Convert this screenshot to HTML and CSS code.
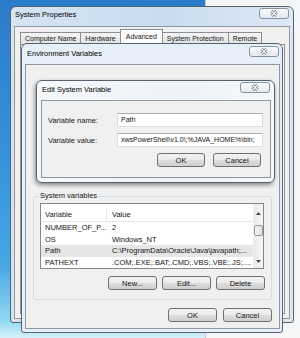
FILE: index.html
```html
<!DOCTYPE html>
<html lang="en">
<head>
    <meta charset="UTF-8">
    <meta name="viewport" content="width=device-width, initial-scale=1.0">
    <title>Environment Variables</title>
    <link rel="stylesheet" href="styles.css">
</head>
<body>

    <div class="desktop">
        <!-- window lying behind everything on the right -->
        <div class="window behind"></div>

        <!-- System Properties -->
        <div class="window sysprops">
            <div class="titlebar">
                <span class="title">System Properties</span>
                <span class="close-btn">
                    <svg width="30" height="11" viewBox="0 0 30 11"><path d="M12.5 3 L17.5 8 M17.5 3 L12.5 8" stroke="#6b7480" stroke-width="2.8"/><path d="M12.5 3 L17.5 8 M17.5 3 L12.5 8" stroke="#ffffff" stroke-width="1.1"/></svg>
                </span>
            </div>
            <div class="client">
                <div class="tabs">
                    <span class="tab">Computer Name</span>
                    <span class="tab">Hardware</span>
                    <span class="tab active">Advanced</span>
                    <span class="tab">System Protection</span>
                    <span class="tab">Remote</span>
                </div>
                <div class="tab-panel"></div>
            </div>
        </div>

        <!-- Environment Variables -->
        <div class="window envvars">
            <div class="titlebar">
                <span class="title">Environment Variables</span>
                <span class="close-btn">
                    <svg width="30" height="11" viewBox="0 0 30 11"><path d="M12.5 3 L17.5 8 M17.5 3 L12.5 8" stroke="#6b7480" stroke-width="2.8"/><path d="M12.5 3 L17.5 8 M17.5 3 L12.5 8" stroke="#ffffff" stroke-width="1.1"/></svg>
                </span>
            </div>
            <div class="client">
                <fieldset class="group">
                    <legend>System variables</legend>
                    <div class="listview">
                        <div class="lv-body">
                            <div class="lv-header">
                                <span class="col-name">Variable</span>
                                <span class="col-value">Value</span>
                            </div>
                            <div class="lv-row">
                                <span class="col-name">NUMBER_OF_P...</span>
                                <span class="col-value">2</span>
                            </div>
                            <div class="lv-row">
                                <span class="col-name">OS</span>
                                <span class="col-value">Windows_NT</span>
                            </div>
                            <div class="lv-row selected">
                                <span class="col-name">Path</span>
                                <span class="col-value">C:\ProgramData\Oracle\Java\javapath;...</span>
                            </div>
                            <div class="lv-row">
                                <span class="col-name">PATHEXT</span>
                                <span class="col-value">.COM;.EXE;.BAT;.CMD;.VBS;.VBE;.JS;....</span>
                            </div>
                        </div>
                        <div class="scrollbar">
                            <span class="sb-arrow up"><svg width="5" height="3" viewBox="0 0 5 3"><polygon points="0,3 2.5,0 5,3" fill="#4d4d4d"/></svg></span>
                            <span class="sb-thumb"></span>
                            <span class="sb-arrow down"><svg width="5" height="3" viewBox="0 0 5 3"><polygon points="0,0 2.5,3 5,0" fill="#4d4d4d"/></svg></span>
                        </div>
                    </div>
                    <div class="button-row">
                        <button class="btn">New...</button>
                        <button class="btn">Edit...</button>
                        <button class="btn">Delete</button>
                    </div>
                </fieldset>
                <div class="button-row dialog-buttons">
                    <button class="btn">OK</button>
                    <button class="btn">Cancel</button>
                </div>
            </div>
        </div>

        <!-- Edit System Variable -->
        <div class="window editvar">
            <div class="titlebar">
                <span class="title">Edit System Variable</span>
                <span class="close-btn">
                    <svg width="30" height="11" viewBox="0 0 30 11"><path d="M12.5 3 L17.5 8 M17.5 3 L12.5 8" stroke="#6b7480" stroke-width="2.8"/><path d="M12.5 3 L17.5 8 M17.5 3 L12.5 8" stroke="#ffffff" stroke-width="1.1"/></svg>
                </span>
            </div>
            <div class="client">
                <div class="form-row">
                    <label>Variable name:</label>
                    <span class="textbox">Path</span>
                </div>
                <div class="form-row">
                    <label>Variable value:</label>
                    <span class="textbox">xwsPowerShell\v1.0\;%JAVA_HOME%\bin;</span>
                </div>
                <div class="button-row edit-buttons">
                    <button class="btn">OK</button>
                    <button class="btn">Cancel</button>
                </div>
            </div>
        </div>
    </div>

</body>
</html>
```

FILE: styles.css
```css
* {
    box-sizing: border-box;
}
body {
    margin: 0;
    width: 300px;
    height: 338px;
    overflow: hidden;
    font-family: 'Liberation Sans', Arial, sans-serif;
    font-size: 7.5px;
    color: #151515;
    background: linear-gradient(to bottom, #2b7bcb 0%, #3591da 45%, #47a6e4 78%, #92d8f2 95%, #d6f2fa 100%);
}
.desktop {
    position: relative;
    width: 300px;
    height: 338px;
}
/* Windows */
.window {
    position: absolute;
    display: flex;
    flex-direction: column;
    border: 1px solid #56636f;
    border-radius: 6px 6px 3px 3px;
}
.behind {
    left: 205px;
    top: -6px;
    width: 110px;
    height: 360px;
    background: #f3f5f7;
    border-color: #c4c8cc;
}
.titlebar {
    display: flex;
    justify-content: space-between;
    align-items: flex-start;
}
.title {
    line-height: 18px;
    color: #000;
}
.close-btn {
    display: block;
    width: 30px;
    height: 11px;
    border: 1px solid #8593a2;
    border-radius: 3px;
    background: linear-gradient(#fbfcfd, #e3e9f0);
}
.close-btn svg {
    display: block;
    margin: -1px 0 0 -1px;
}
.client {
    flex: 1;
    background-color: #f0f0f0;
    border: 1px solid #8d98a3;
}
/* System Properties */
.sysprops {
    left: 10px;
    top: 6px;
    width: 284px;
    height: 317px;
    padding: 0 3px 3px;
    background: linear-gradient(to right, #d4e4f3, #c9dcef 55%, #dde9f5);
}
.sysprops .titlebar {
    height: 19px;
}
.sysprops .title {
    margin-left: 1px;
    line-height: 16px;
}
.sysprops .close-btn {
    margin: 1px 1px 0 0;
}
.sysprops .client {
    display: flex;
    flex-direction: column;
    padding: 5px 4px 4px 5px;
}
.tabs {
    display: flex;
    align-items: flex-end;
    height: 12px;
}
.tab {
    height: 12px;
    padding: 0 4px;
    font-size: 7px;
    line-height: 11px;
    border: 1px solid #8a8e96;
    border-bottom: none;
    margin-right: -1px;
    background: linear-gradient(#f4f4f4, #e2e2e2);
}
.tab.active {
    height: 15px;
    line-height: 14px;
    padding: 0 5px;
    background: #fcfcfc;
    position: relative;
}
.tab-panel {
    flex: 1;
    background-color: #fcfcfc;
    border: 1px solid #8a8e96;
}
/* Environment Variables */
.envvars {
    left: 21px;
    top: 43px;
    width: 262px;
    height: 290px;
    padding: 0 2px 3px 3px;
    background: #e6eff8;
}
.envvars .titlebar {
    height: 20px;
}
.envvars .title {
    margin: 1px 0 0 2px;
}
.envvars .close-btn {
    margin: 2px 1px 0 0;
}
.envvars .client {
    padding: 0 7px;
}
.group {
    margin: 126px 0 0;
    padding: 2px 7px 9px 6px;
    min-width: 0;
    border: 1px solid #d3dbe2;
    border-radius: 3px;
}
.group legend {
    padding: 0 1px;
    margin-left: -1px;
    line-height: 10px;
}
.listview {
    display: flex;
    height: 66px;
    border: 1px solid #828790;
    background-color: #ffffff;
}
.lv-body {
    flex: 1;
    min-width: 0;
}
.lv-header,
.lv-row {
    display: flex;
    white-space: nowrap;
}
.lv-header {
    height: 18px;
    padding-top: 4px;
    line-height: 14px;
    border-bottom: 1px solid #e3e6ea;
}
.lv-header .col-name {
    border-right: 1px solid #e3e6ea;
}
.lv-row {
    height: 11.5px;
    line-height: 11.5px;
}
.lv-row.selected {
    background-color: #e6e6e6;
}
.col-name {
    width: 66px;
    padding-left: 4px;
    flex-shrink: 0;
}
.col-value {
    padding-left: 5px;
    overflow: hidden;
}
.scrollbar {
    width: 10px;
    display: flex;
    flex-direction: column;
    align-items: center;
    background: linear-gradient(to right, #eaeaea, #f6f6f6);
    border-left: 1px solid #f0f0f0;
}
.sb-arrow {
    display: flex;
    justify-content: center;
    width: 100%;
}
.sb-arrow.up {
    height: 16px;
    padding-top: 8px;
}
.sb-arrow.down {
    margin-top: auto;
    height: 12px;
    padding-top: 4px;
}
.sb-thumb {
    width: 9px;
    height: 11px;
    margin-top: 5px;
    border: 1px solid #979797;
    border-radius: 2px;
    background: linear-gradient(to right, #f4f4f4, #e0e0e0);
}
.button-row {
    display: flex;
    justify-content: flex-end;
    gap: 5px;
    margin-top: 7px;
    margin-right: -1px;
}
.btn {
    width: 49px;
    height: 14px;
    padding: 0;
    font-family: inherit;
    font-size: 7.5px;
    color: #151515;
    border: 1px solid #707070;
    border-radius: 3px;
    background: linear-gradient(#f2f2f2 0%, #ebebeb 50%, #dddddd 51%, #cfcfcf 100%);
}
.dialog-buttons {
    gap: 6px;
    margin-top: 8px;
    margin-right: 0;
}
/* Edit System Variable */
.editvar {
    left: 36px;
    top: 80px;
    width: 239px;
    height: 103px;
    padding: 0 3px 4px 4px;
    border-radius: 6px;
    background: linear-gradient(to right, #f6f9fc, #edf3f9 60%, #f4f8fb);
    box-shadow: -1px 2px 4px rgba(0, 0, 0, 0.45);
}
.editvar .titlebar {
    height: 19px;
}
.editvar .title {
    margin-left: 1px;
}
.editvar .close-btn {
    margin: 1px 1px 0 0;
}
.editvar .client {
    padding: 12px 7px 0 6px;
}
.form-row {
    display: flex;
    align-items: center;
    height: 14px;
    margin-bottom: 6px;
}
.form-row label {
    width: 69px;
}
.textbox {
    flex: 1;
    height: 14px;
    padding-left: 3px;
    font-size: 7px;
    line-height: 12px;
    white-space: nowrap;
    overflow: hidden;
    background-color: #ffffff;
    border: 1px solid #dbdfe6;
    border-top-color: #abadb3;
}
.edit-buttons {
    gap: 8px;
    margin: 3px 2px 0 0;
}
.edit-buttons .btn {
    width: 48px;
}
```
